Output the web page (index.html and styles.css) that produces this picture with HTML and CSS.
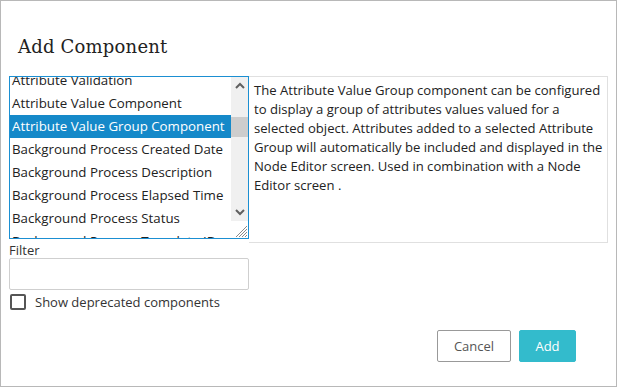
FILE: index.html
```html
<!DOCTYPE html>
<html>
<head>
<meta charset="utf-8">
<link rel="stylesheet" href="styles.css">
</head>
<body>
<div class="dialog">
  <h1 class="title">Add Component</h1>
  <div class="main">
    <div class="left">
      <div class="listbox">
        <ul class="items">
          <li>Attribute Validation</li>
          <li>Attribute Value Component</li>
          <li class="selected">Attribute Value Group Component</li>
          <li>Background Process Created Date</li>
          <li>Background Process Description</li>
          <li>Background Process Elapsed Time</li>
          <li>Background Process Status</li>
          <li>Background Process Template ID</li>
        </ul>
        <div class="scrollbar">
          <div class="arrow">
            <svg width="10" height="7" viewBox="0 0 10 7"><path d="M1 6 L5 2 L9 6" fill="none" stroke="#606060" stroke-width="2"/></svg>
          </div>
          <div class="track"><div class="thumb"></div></div>
          <div class="arrow">
            <svg width="10" height="7" viewBox="0 0 10 7"><path d="M1 1 L5 5 L9 1" fill="none" stroke="#606060" stroke-width="2"/></svg>
          </div>
          <div class="grip">
            <svg width="16" height="16" viewBox="0 0 16 16"><path d="M15 4 L4 15 M15 7 L7 15 M15 10 L10 15 M15 13 L13 15" stroke="#8a8a8a" stroke-width="1"/></svg>
          </div>
        </div>
      </div>
      <label class="filter-label">Filter</label>
      <input class="filter" type="text">
      <label class="check"><span class="box"></span>Show deprecated components</label>
    </div>
    <div class="desc">The Attribute Value Group component can be configured to display a group of attributes values valued for a selected object. Attributes added to a selected Attribute Group will automatically be included and displayed in the Node Editor screen. Used in combination with a Node Editor screen .</div>
  </div>
  <div class="footer">
    <button class="btn cancel">Cancel</button>
    <button class="btn add">Add</button>
  </div>
</div>
</body>
</html>
```
FILE: styles.css
```css
html, body { margin: 0; padding: 0; background: #fff; }
body { font-family: "Open Sans", "Noto Sans", sans-serif; color: #222; }
.dialog {
  width: 615px; height: 385px;
  border: 1px solid #b8b8b8;
  box-sizing: content-box;
  position: relative;
}
.title {
  margin: 0;
  padding: 35px 0 0 17px;
  height: 40px;
  font-family: "DejaVu Serif", serif;
  font-weight: normal;
  font-size: 18px;
  letter-spacing: 0.2px;
  color: #222;
}
.main { display: flex; padding-left: 8px; }
.left { width: 240px; display: flex; flex-direction: column; }
.listbox {
  height: 161px;
  border: 1px solid #1b8fd2;
  display: flex;
  overflow: hidden;
}
.items {
  list-style: none; margin: -8px 0 0 0; padding: 0;
  flex: 1;
  font-size: 13.3px;
  color: #222;
}
.items li { height: 23px; line-height: 23px; padding-left: 2px; white-space: nowrap; overflow: hidden; }
.items li.selected { background: #1589c9; color: #fff; }
.scrollbar { width: 17px; display: flex; flex-direction: column; background: #fff; }
.arrow { height: 17px; background: #f0f0f0; display: flex; align-items: center; justify-content: center; }
.track { flex: 1; background: #f0f0f0; padding-top: 23px; }
.thumb { height: 20px; background: #cdcdcd; margin: 0 0 0 0; }
.grip { height: 17px; display: flex; align-items: flex-end; justify-content: flex-end; }
.filter-label { font-size: 13px; color: #333; margin-top: 2px; height: 18px; line-height: 18px; }
.filter { height: 32px; box-sizing: border-box; border: 1px solid #cfcfcf; border-radius: 2px; margin: -1px 0 0 0; padding: 0; }
.check { display: flex; align-items: center; font-size: 13px; color: #333; margin-top: 3px; }
.box { width: 12px; height: 12px; border: 2px solid #555; border-radius: 2px; margin: 0 9px 0 1px; }
.desc {
  width: 349px; height: 161px;
  border: 1px solid #e0e0e0;
  border-left: none;
  padding: 4px 4px 0 5px;
  box-sizing: content-box;
  font-size: 13.1px;
  line-height: 19px;
  color: #222;
}
.footer { display: flex; justify-content: flex-end; gap: 8px; padding: 19px 40px 0 0; }
.btn { height: 32px; font-family: "Open Sans", sans-serif; font-size: 13px; border-radius: 2px; }
.cancel { width: 74px; background: #fff; border: 1px solid #999; color: #555; }
.add { width: 57px; background: #33bbcc; border: 1px solid #33bbcc; color: #fff; }
```
